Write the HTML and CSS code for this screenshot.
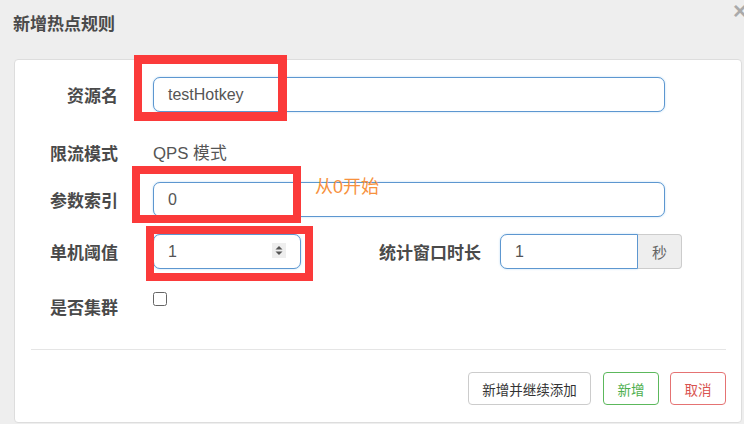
FILE: index.html
```html
<!DOCTYPE html>
<html lang="zh">
<head>
<meta charset="utf-8">
<title>新增热点规则</title>
<link rel="stylesheet" href="styles.css">
</head>
<body>
<div class="page">
  <div class="header">
    <h4 class="title">新增热点规则</h4>
    <span class="close">×</span>
  </div>
  <div class="card">
    <div class="form">
      <div class="row row1">
        <label class="label">资源名</label>
        <div class="input wide"><span class="val">testHotkey</span></div>
      </div>
      <div class="row row2">
        <label class="label">限流模式</label>
        <span class="static">QPS 模式</span>
      </div>
      <div class="row row3">
        <label class="label">参数索引</label>
        <div class="input wide"><span class="val">0</span></div>
      </div>
      <div class="row row4">
        <label class="label">单机阈值</label>
        <div class="input num">
          <span class="val">1</span>
          <span class="spin">
            <svg width="14" height="15" viewBox="0 0 14 15"><path d="M7 3 L10.5 6.5 L3.5 6.5 Z" fill="#555"/><path d="M7 12 L10.5 8.5 L3.5 8.5 Z" fill="#555"/></svg>
          </span>
        </div>
        <label class="label label2">统计窗口时长</label>
        <div class="group">
          <div class="input gin"><span class="val">1</span></div>
          <span class="addon">秒</span>
        </div>
      </div>
      <div class="row row5">
        <label class="label">是否集群</label>
        <span class="check"></span>
      </div>
    </div>
    <div class="divider"></div>
    <div class="footer">
      <button class="btn">新增并继续添加</button>
      <button class="btn btn-ok">新增</button>
      <button class="btn btn-cancel">取消</button>
    </div>
  </div>
  <div class="mark mark1"></div>
  <div class="mark mark2"></div>
  <div class="mark mark3"></div>
  <span class="note">从0开始</span>
</div>
</body>
</html>
```
FILE: styles.css
```css
* { box-sizing: border-box; }
html, body { margin: 0; padding: 0; }
body {
  background: #eeeeee;
  font-family: "Liberation Sans", "Noto Sans CJK SC", sans-serif;
  color: #555;
  overflow: hidden;
  width: 744px;
  height: 424px;
}
.page { position: relative; width: 744px; height: 424px; }
.header { height: 59px; padding: 15px 0 0 13px; }
.title {
  margin: 0;
  font-size: 17px;
  line-height: 20px;
  font-weight: bold;
  color: #4a4a4a;
}
.close {
  position: absolute;
  left: 733px;
  top: -1px;
  font-size: 24px;
  font-weight: bold;
  color: #aaa;
  line-height: 24px;
}
.card {
  margin-left: 14px;
  width: 728px;
  height: 364px;
  background: #fff;
  border: 1px solid #dddddd;
  border-radius: 4px;
}
.form { padding-top: 17px; }
.row { display: flex; align-items: center; }
.row1 { height: 35px; }
.row2 { height: 36px; margin-top: 22px; }
.row3 { height: 35px; margin-top: 12px; }
.row4 { height: 35px; margin-top: 17px; }
.row5 { height: 36px; margin-top: 22px; align-items: flex-start; }
.label {
  width: 103px;
  margin-right: 35px;
  text-align: right;
  font-size: 17px;
  font-weight: bold;
  color: #4a4a4a;
  flex: none;
}
.row5 .label { line-height: 36px; }
.label2 { width: auto; margin-left: 78px; margin-right: 19px; }
.static { font-size: 16.8px; color: #555; }
.input {
  height: 35px;
  border: 1px solid #5d97d0;
  border-radius: 7px;
  display: flex;
  align-items: center;
  padding-left: 14px;
  background: #fff;
  box-shadow: 0 0 2px rgba(102, 175, 233, 0.5);
}
.val { font-size: 16px; color: #555; }
.wide { width: 512px; }
.num { width: 148px; position: relative; }
.spin {
  position: absolute;
  left: 118px;
  top: 8px;
  width: 14px;
  height: 15px;
  background: #eeeeee;
  display: flex;
}
.group { display: flex; width: 182px; height: 35px; }
.gin { width: 138px; border-radius: 7px 0 0 7px; }
.addon {
  width: 44px;
  height: 35px;
  background: #eeeeee;
  border: 1px solid #cccccc;
  border-left: none;
  border-radius: 0 4px 4px 0;
  display: flex;
  align-items: center;
  justify-content: center;
  font-size: 15px;
  color: #666;
}
.check {
  width: 14px;
  height: 14px;
  margin-top: 1px;
  border: 1px solid #666;
  border-radius: 2.5px;
  background: #fff;
}
.divider {
  margin: 22px 15px 0 16px;
  height: 1px;
  background: #e5e5e5;
}
.footer {
  display: flex;
  justify-content: flex-end;
  gap: 12px;
  margin-top: 22px;
  padding-right: 15px;
}
.btn {
  height: 33px;
  padding: 0;
  font-family: "Liberation Sans", "Noto Sans CJK SC", sans-serif;
  font-size: 13.5px;
  color: #333;
  background: #fff;
  border: 1px solid #cccccc;
  border-radius: 4px;
  width: 123px;
}
.btn-ok { width: 56px; color: #4cae4c; border-color: #5cb85c; }
.btn-cancel { width: 56px; color: #d9534f; border-color: #e57373; margin-left: -1px; }
.mark {
  position: absolute;
  border: 8px solid #fb3a3a;
}
.mark1 { left: 134px; top: 55px; width: 153px; height: 66px; border-width: 9px 9px 9px 8px; }
.mark2 { left: 132px; top: 166px; width: 169px; height: 57px; }
.mark3 { left: 146px; top: 226px; width: 167px; height: 55px; }
.note {
  position: absolute;
  left: 315px;
  top: 177px;
  font-size: 18px;
  line-height: 20px;
  color: #f7913d;
}
```
